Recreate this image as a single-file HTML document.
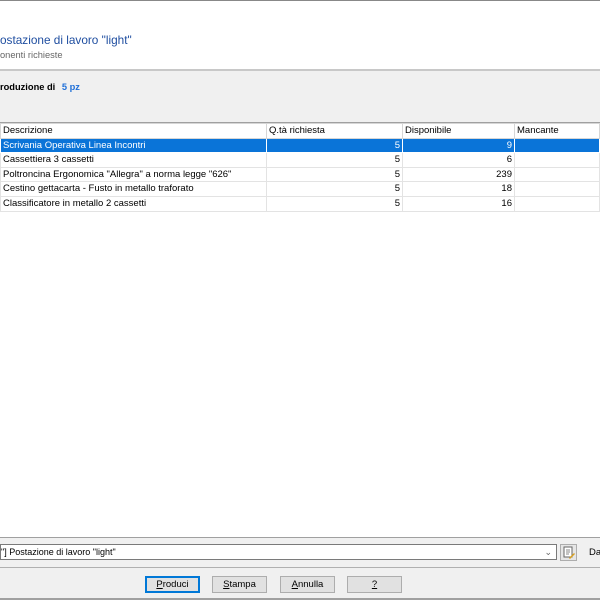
<!DOCTYPE html>
<html><head><style>
body{margin:0;width:600px;height:600px;overflow:hidden;font-family:"Liberation Sans",sans-serif;font-size:11px;background:#f0f0f0;position:relative}
.abs{position:absolute}
.hdr{left:0;top:0;width:600px;height:69px;background:#fff;border-top:1px solid #888;box-sizing:border-box}
table{border-collapse:collapse;position:absolute;left:0;top:123px;width:600px;font-size:9.5px;table-layout:fixed}
td{height:13.6px;line-height:13.6px;padding:0 2px;border:1px solid #e3e3e3;white-space:nowrap;overflow:hidden}
td.n{text-align:right}
tr.sel td{background:#0a74d8;color:#fff;border-color:#fff}
tr.h td{border-color:#d6d6d6}
.btn{position:absolute;top:576px;width:55px;height:17px;border:1px solid #adadad;background:#e1e1e1;box-sizing:border-box;font-size:9.5px;text-align:center;line-height:15px}
</style></head><body>
<div class="abs hdr"></div>
<div class="abs" style="left:0;top:33px;font-size:11.8px;color:#1f4ea0">ostazione di lavoro "light"</div>
<div class="abs" style="left:0;top:50px;font-size:9.3px;color:#666">onenti richieste</div>
<div class="abs" style="left:0;top:69px;width:600px;height:2px;background:#c8c8c8"></div>
<div class="abs" style="left:0;top:82px;font-size:9.3px;font-weight:bold">roduzione di <span style="color:#1f6fd8;margin-left:4px">5 pz</span></div>
<div class="abs" style="left:0;top:122px;width:600px;height:415px;background:#fff;border-top:1px solid #a0a0a0"></div>
<table>
<colgroup><col style="width:266px"><col style="width:136px"><col style="width:112px"><col></colgroup>
<tr class="h"><td>Descrizione</td><td>Q.tà richiesta</td><td>Disponibile</td><td>Mancante</td></tr>
<tr class="sel"><td>Scrivania Operativa Linea Incontri</td><td class="n">5</td><td class="n">9</td><td></td></tr>
<tr><td>Cassettiera 3 cassetti</td><td class="n">5</td><td class="n">6</td><td></td></tr>
<tr><td>Poltroncina Ergonomica "Allegra" a norma legge "626"</td><td class="n">5</td><td class="n">239</td><td></td></tr>
<tr><td>Cestino gettacarta - Fusto in metallo traforato</td><td class="n">5</td><td class="n">18</td><td></td></tr>
<tr><td>Classificatore in metallo 2 cassetti</td><td class="n">5</td><td class="n">16</td><td></td></tr>
</table>
<div class="abs" style="left:0;top:537px;width:600px;height:1px;background:#a0a0a0"></div>
<div class="abs" style="left:0;top:544px;width:557px;height:16px;background:#fff;border:1px solid #7a7a7a;box-sizing:border-box;font-size:9px;line-height:14px">"] Postazione di lavoro "light"<span style="position:absolute;right:4px;color:#666">&#8964;</span></div>
<div class="abs" style="left:560px;top:544px;width:17px;height:17px;border:1px solid #adadad;background:#e6e6e6;box-sizing:border-box"><svg width="15" height="15" viewBox="0 0 15 15"><rect x="3" y="2" width="8" height="10" fill="#fff" stroke="#666"/><path d="M5 5h4M5 7h4M5 9h3" stroke="#888"/><path d="M8 13l5-5 1 1-5 5z" fill="#d8a020"/></svg></div>
<div class="abs" style="left:589px;top:547px;font-size:9.5px">Da</div>
<div class="abs" style="left:0;top:567px;width:600px;height:1px;background:#b0b0b0"></div>
<div class="btn" style="left:145px;border:2px solid #0078d7;line-height:13px"><u>P</u>roduci</div>
<div class="btn" style="left:212px"><u>S</u>tampa</div>
<div class="btn" style="left:280px"><u>A</u>nnulla</div>
<div class="btn" style="left:347px"><u>?</u></div>
<div class="abs" style="left:0;top:598px;width:600px;height:2px;background:#a0a0a0"></div>
</body></html>
